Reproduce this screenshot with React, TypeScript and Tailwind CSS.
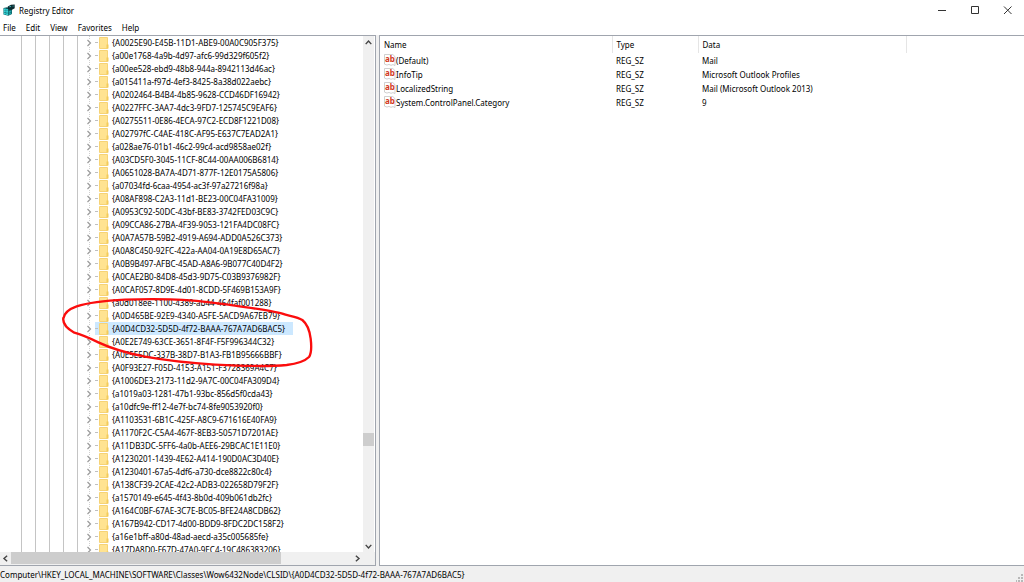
import React from "react";

const keys = [
  "{A0025E90-E45B-11D1-ABE9-00A0C905F375}",
  "{a00e1768-4a9b-4d97-afc6-99d329f605f2}",
  "{a00ee528-ebd9-48b8-944a-8942113d46ac}",
  "{a015411a-f97d-4ef3-8425-8a38d022aebc}",
  "{A0202464-B4B4-4b85-9628-CCD46DF16942}",
  "{A0227FFC-3AA7-4dc3-9FD7-125745C9EAF6}",
  "{A0275511-0E86-4ECA-97C2-ECD8F1221D08}",
  "{A02797fC-C4AE-418C-AF95-E637C7EAD2A1}",
  "{a028ae76-01b1-46c2-99c4-acd9858ae02f}",
  "{A03CD5F0-3045-11CF-8C44-00AA006B6814}",
  "{A0651028-BA7A-4D71-877F-12E0175A5806}",
  "{a07034fd-6caa-4954-ac3f-97a27216f98a}",
  "{A08AF898-C2A3-11d1-BE23-00C04FA31009}",
  "{A0953C92-50DC-43bf-BE83-3742FED03C9C}",
  "{A09CCA86-27BA-4F39-9053-121FA4DC08FC}",
  "{A0A7A57B-59B2-4919-A694-ADD0A526C373}",
  "{A0A8C450-92FC-422a-AA04-0A19E8D65AC7}",
  "{A0B9B497-AFBC-45AD-A8A6-9B077C40D4F2}",
  "{A0CAE2B0-84D8-45d3-9D75-C03B9376982F}",
  "{A0CAF057-8D9E-4d01-8CDD-5F469B153A9F}",
  "{a0d018ee-1100-4389-ab44-464faf001288}",
  "{A0D465BE-92E9-4340-A5FE-5ACD9A67EB79}",
  "{A0D4CD32-5D5D-4f72-BAAA-767A7AD6BAC5}",
  "{A0E2E749-63CE-3651-8F4F-F5F996344C32}",
  "{A0E5E5DC-337B-38D7-B1A3-FB1B95666BBF}",
  "{A0F93E27-F05D-4153-A151-F3728369A4C7}",
  "{A1006DE3-2173-11d2-9A7C-00C04FA309D4}",
  "{a1019a03-1281-47b1-93bc-856d5f0cda43}",
  "{a10dfc9e-ff12-4e7f-bc74-8fe9053920f0}",
  "{A1103531-6B1C-425F-A8C9-671616E40FA9}",
  "{A1170F2C-C5A4-467F-8EB3-50571D7201AE}",
  "{A11DB3DC-5FF6-4a0b-AEE6-29BCAC1E11E0}",
  "{A1230201-1439-4E62-A414-190D0AC3D40E}",
  "{A1230401-67a5-4df6-a730-dce8822c80c4}",
  "{A138CF39-2CAE-42c2-ADB3-022658D79F2F}",
  "{a1570149-e645-4f43-8b0d-409b061db2fc}",
  "{A164C0BF-67AE-3C7E-BC05-BFE24A8CDB62}",
  "{A167B942-CD17-4d00-BDD9-8FDC2DC158F2}",
  "{a16e1bff-a80d-48ad-aecd-a35c005685fe}",
  "{A17DA8D0-F67D-47A0-9EC4-19C486383206}",
];

const selectedKey = "{A0D4CD32-5D5D-4f72-BAAA-767A7AD6BAC5}";

const values = [
  { name: "(Default)", type: "REG_SZ", data: "Mail" },
  { name: "InfoTip", type: "REG_SZ", data: "Microsoft Outlook Profiles" },
  { name: "LocalizedString", type: "REG_SZ", data: "Mail (Microsoft Outlook 2013)" },
  { name: "System.ControlPanel.Category", type: "REG_SZ", data: "9" },
];

const menus = ["File", "Edit", "View", "Favorites", "Help"];

function AppIcon() {
  return (
    <svg viewBox="0 0 12 12" className="size-3" aria-hidden="true">
      <path d="M0.500 4 L4 3.200 L9 4.500 V10 L5.300 11.700 L0.500 10.500 Z" fill="#0f5a5f" />
      <path d="M0.800 4.600h2v1.800h-2zM3.100 4.900h2v1.800h-2zM0.800 6.800h2v1.700h-2zM3.100 7.100h2v1.700h-2zM0.800 8.900h2v1.500h-2zM3.100 9.200h2v1.700h-2z" fill="#35d3d6" />
      <path d="M5.700 7.200l2.700-.9v1.700l-2.700.9zM5.700 9.400l2.700-.9v1.500l-2.700 1.100z" fill="#1fa5aa" />
      <path d="M4.800 2.500 L8 0.700 L11.700 0.500 V4.300 L8.600 6 L4.800 5.200 Z" fill="#0c2a30" />
      <path d="M5.800 2.900l1.600-1 1 .3-1.400 1z" fill="#46d0d4" />
      <path d="M9.600 1.400h1.200v1l-1.200.5z" fill="#2a7c84" />
    </svg>
  );
}

function FolderIcon() {
  return (
    <svg viewBox="0 0 10 12" className="h-3 w-[10px] shrink-0" aria-hidden="true">
      <path d="M0.500 0.500h8v11h-8z" fill="#ffe391" stroke="#f6d376" />
      <path d="M7.500 7.500h2v4h-2z" fill="#f3cb58" />
    </svg>
  );
}

function StringIcon() {
  return (
    <svg viewBox="0 0 12 12" className="size-3 shrink-0 overflow-visible" aria-hidden="true">
      <path d="M0.500 0.500h8.300l2.200 2.200v8.800l-2-.9-2 .7-2-.9-2 .7-2.500-1z" fill="#fff" stroke="#c4c4c4" strokeWidth="0.800" />
      <text x="1" y="8" fontSize="8" fontWeight="700" fontFamily="Noto Sans, sans-serif" fill="#d2371c">ab</text>
    </svg>
  );
}

function Chevron({ className }: { className: string }) {
  return (
    <svg viewBox="0 0 6 6" className={className} fill="none" stroke="currentColor" strokeWidth="1.200" aria-hidden="true">
      <path d="M1.600 0.600 L4.300 3 L1.600 5.400" />
    </svg>
  );
}

function TreeArrow() {
  return (
    <svg viewBox="0 0 10 13" className="h-[13px] w-[10px]" fill="none" aria-hidden="true">
      <path d="M4 0h1v1H4zM4 2h1v1H4zM4 11h1v1H4z" fill="#d0d0d0" />
      <path d="M2.500 4 L5.500 7 L2.500 10" stroke="#9a9a9a" strokeWidth="1.200" />
    </svg>
  );
}

function Tree() {
  return (
    <div className="flex min-h-0 min-w-0 flex-1 overflow-hidden">
      <div className="flex shrink-0 gap-[13px] pl-[21px]" aria-hidden="true">
        <div className="w-px bg-[#c4c4c4]" />
        <div className="w-px bg-[#c4c4c4]" />
        <div className="w-px bg-[#c4c4c4]" />
        <div className="w-px bg-[#c4c4c4]" />
        <div className="w-px bg-[#c4c4c4]" />
      </div>
      <ul className="min-w-0 flex-1 pl-[7px]">
        {keys.map((key) => (
          <li key={key} className="flex h-[13px] items-center">
            <button aria-label={"Expand " + key} className="h-full w-[10px] shrink-0">
              <TreeArrow />
            </button>
            <span
              className={
                key === selectedKey
                  ? "flex h-full items-center bg-[#cce8ff] pr-2"
                  : "flex h-full items-center pr-2"
              }
            >
              <span className="mr-px h-px w-[3px] bg-[#c0c0c0]" />
              <FolderIcon />
              <span className="pl-[3px] whitespace-nowrap">{key}</span>
            </span>
          </li>
        ))}
      </ul>
    </div>
  );
}

function Annotation() {
  return (
    <svg viewBox="0 0 795 240" className="pointer-events-none absolute top-[256px] left-[55px] h-[80px] w-[265px]" fill="none" stroke="#fb0d0d" strokeWidth="7" strokeLinejoin="round" strokeLinecap="round" aria-hidden="true">
      <path d="M25 80 C27 62 45 50 65 43 C100 32 150 26 210 23 C260 21 300 21 345 22 C400 23 450 28 520 38 C570 46 650 55 682 65 C700 72 725 73 742 84 C758 97 764 115 767 140 C770 165 769 185 762 195 C750 207 720 216 695 219 C640 224 560 222 480 218 C400 213 320 203 270 194 C220 184 170 170 130 151 C105 139 80 128 58 122 C40 112 22 98 25 78" />
    </svg>
  );
}

export default function App() {
  return (
    <div className="flex h-screen flex-col overflow-hidden bg-white font-['Noto_Sans',sans-serif] text-[8px] leading-[13px] text-black">
      <header className="flex h-5 shrink-0 items-center justify-between">
        <div className="flex items-center gap-1 pl-[3px]">
          <AppIcon />
          <h1>Registry Editor</h1>
        </div>
        <div className="flex h-full">
          <button aria-label="Minimize" className="flex w-[33px] items-center justify-center">
            <svg viewBox="0 0 9 9" className="size-[9px]" fill="none" stroke="#333"><path d="M1 4.500h8" /></svg>
          </button>
          <button aria-label="Maximize" className="flex w-[33px] items-center justify-center">
            <svg viewBox="0 0 9 9" className="size-[9px]" fill="none" stroke="#333"><path d="M1.500 0.500h7v7h-7z" /></svg>
          </button>
          <button aria-label="Close" className="flex w-[33px] items-center justify-center">
            <svg viewBox="0 0 9 9" className="size-[9px]" fill="none" stroke="#333"><path d="M1 0.500l7.500 7.500M8.500 0.500l-7.500 7.500" /></svg>
          </button>
        </div>
      </header>
      <nav className="flex h-[15px] shrink-0 items-center gap-[10px] pl-[3px]">
        {menus.map((m) => (
          <button key={m}>{m}</button>
        ))}
      </nav>
      <main className="flex min-h-0 flex-1 gap-[3px] bg-[#f0f0f0]">
        <section aria-label="Keys" className="relative flex w-[376px] shrink-0 flex-col border-y border-r border-[#a0a5ae] bg-white">
          <div className="flex min-h-0 flex-1 pr-px">
            <Tree />
            <div className="flex w-[11px] shrink-0 flex-col bg-[#f0f0f0] text-[#444]">
              <button aria-label="Scroll up" className="flex h-3 items-center justify-center"><Chevron className="size-[7px] -rotate-90" /></button>
              <div className="grow-[384]" />
              <div className="h-[13px] bg-[#cdcdcd]" />
              <div className="grow-[94]" />
              <button aria-label="Scroll down" className="flex h-3 items-center justify-center"><Chevron className="size-[7px] rotate-90" /></button>
            </div>
          </div>
          <div className="flex h-[13px] shrink-0 bg-[#f0f0f0] pr-3 pb-px text-[#444]">
            <button aria-label="Scroll left" className="flex w-[11px] items-center justify-center"><Chevron className="size-[7px] rotate-180" /></button>
            <div className="grow-[269] bg-[#cdcdcd]" />
            <div className="grow-[70]" />
            <button aria-label="Scroll right" className="flex w-3 items-center justify-center"><Chevron className="size-[7px]" /></button>
          </div>
          <Annotation />
        </section>
        <section aria-label="Values" className="min-w-0 flex-1 border-y border-l border-[#a0a5ae] bg-white">
          <table className="w-full table-fixed border-collapse text-left">
            <colgroup>
              <col className="w-[232px]" />
              <col className="w-[86px]" />
              <col className="w-[208px]" />
              <col />
            </colgroup>
            <thead>
              <tr className="h-[17px]">
                <th className="border-r border-[#e5e5e5] p-0 pl-1 font-normal">Name</th>
                <th className="border-r border-[#e5e5e5] p-0 pl-1 font-normal">Type</th>
                <th className="border-r border-[#e5e5e5] p-0 pl-1 font-normal">Data</th>
                <td />
              </tr>
            </thead>
            <tbody>
              {values.map((v) => (
                <tr key={v.name} className="h-[14px]">
                  <td className="p-0 pl-1">
                    <div className="flex items-center"><StringIcon />{v.name}</div>
                  </td>
                  <td className="p-0 pl-1">{v.type}</td>
                  <td className="p-0 pl-1">{v.data}</td>
                  <td />
                </tr>
              ))}
            </tbody>
          </table>
        </section>
      </main>
      <footer className="flex h-4 shrink-0 items-center justify-between bg-[#f0f0f0]">
        <span>Computer\HKEY_LOCAL_MACHINE\SOFTWARE\Classes\Wow6432Node\CLSID\{"{A0D4CD32-5D5D-4f72-BAAA-767A7AD6BAC5}"}</span>
        <svg viewBox="0 0 8 8" className="size-2 self-end" fill="#b8b8b8" aria-hidden="true">
          <path d="M5 0h2v2H5zM5 3h2v2H5zM2 3h2v2H2zM5 6h2v2H5zM2 6h2v2H2zM0 6h1v2H0z" />
        </svg>
      </footer>
    </div>
  );
}
